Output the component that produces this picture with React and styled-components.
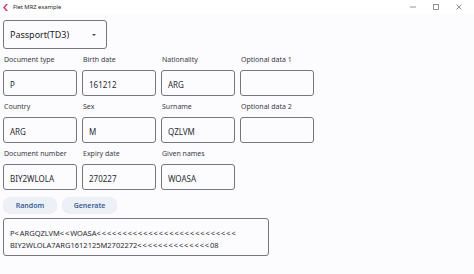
import React from "react";
import styled, { createGlobalStyle } from "styled-components";

const Global = createGlobalStyle`
  html, body { margin: 0; padding: 0; background: #fcfcff; }
  body { font-family: "Noto Sans", "Open Sans", sans-serif; color: #1b1b1f; }
  * { box-sizing: border-box; }
`;

const Window = styled.div`
  width: 474px;
  height: 274px;
  display: flex;
  flex-direction: column;
  background: #fcfcff;
  overflow: hidden;
`;

const TitleBar = styled.div`
  height: 14px;
  background: #ffffff;
  display: flex;
  align-items: center;
  padding-left: 3px;
`;

const TitleText = styled.span`
  font-size: 5.8px;
  color: #222;
  margin-left: 5px;
`;

const Controls = styled.div`
  margin-left: auto;
  display: flex;
  height: 100%;
  padding-right: 4px;
`;

const Ctrl = styled.div`
  width: 23px;
  height: 100%;
  display: flex;
  align-items: center;
  justify-content: center;
`;

const Content = styled.div`
  padding: 6px 3px 0 3px;
  display: flex;
  flex-direction: column;
`;

const Select = styled.div`
  width: 104px;
  height: 29px;
  border: 1px solid #77767b;
  border-radius: 3px;
  display: flex;
  align-items: center;
  padding: 0 10px 0 6px;
  font-size: 9px;
  color: #1b1b1f;
`;

const Caret = styled.span`
  margin-left: auto;
  width: 0;
  height: 0;
  border-left: 2.5px solid transparent;
  border-right: 2.5px solid transparent;
  border-top: 2.5px solid #444;
`;

const Grid = styled.div`
  display: grid;
  grid-template-columns: repeat(4, 74px);
  column-gap: 5px;
`;

const Field = styled.div`
  display: flex;
  flex-direction: column;
`;

const Label = styled.div`
  font-size: 7px;
  height: 21px;
  padding-top: 6px;
  line-height: 10px;
  color: #3a3a3f;
  padding-left: 1px;
`;

const Box = styled.div`
  height: 26px;
  border: 1px solid #77767b;
  border-radius: 3px;
  display: flex;
  align-items: center;
  padding: 2px 6px 0 6px;
  font-size: 8px;
  color: #2a2a2e;
`;

const Buttons = styled.div`
  display: flex;
  gap: 5px;
  margin-top: 7px;
`;

const Button = styled.div`
  width: ${(p) => p.w}px;
  height: 16px;
  border-radius: 8px;
  background: #eef0f7;
  color: #365f96;
  font-size: 7px;
  font-weight: 600;
  display: flex;
  align-items: center;
  justify-content: center;
  box-shadow: 0 0.5px 1px rgba(0, 0, 0, 0.12);
`;

const Mrz = styled.div`
  width: 266px;
  height: 38px;
  margin-top: 5px;
  border: 1px solid #77767b;
  border-radius: 3px;
  padding: 8px 6px 0 6px;
  font-size: 7.5px;
  line-height: 12px;
  color: #2a2a2e;
  white-space: pre;
`;

const Chevrons = styled.span`
  letter-spacing: 0.9px;
`;

const fields = [
  ["Document type", "P"],
  ["Birth date", "161212"],
  ["Nationality", "ARG"],
  ["Optional data 1", ""],
  ["Country", "ARG"],
  ["Sex", "M"],
  ["Surname", "QZLVM"],
  ["Optional data 2", ""],
  ["Document number", "BIY2WLOLA"],
  ["Expiry date", "270227"],
  ["Given names", "WOASA"],
];

const MrzLine = ({ text }) =>
  text.split(/(<+)/).map((part, i) =>
    part.startsWith("<") ? <Chevrons key={i}>{part}</Chevrons> : <span key={i}>{part}</span>
  );

export default function App() {
  return (
    <Window>
      <Global />
      <TitleBar>
        <svg width="5" height="7" viewBox="0 0 5 7">
          <path d="M3 0 L5 0 L2 3.5 L5 7 L3 7 L0 3.5 Z" fill="#d43b7c" />
        </svg>
        <TitleText>Flet MRZ example</TitleText>
        <Controls>
          <Ctrl>
            <svg width="6" height="6" viewBox="0 0 6 6">
              <line x1="0" y1="3" x2="6" y2="3" stroke="#666" strokeWidth="0.7" />
            </svg>
          </Ctrl>
          <Ctrl>
            <svg width="6" height="6" viewBox="0 0 6 6">
              <rect x="0.5" y="0.5" width="5" height="5" fill="none" stroke="#666" strokeWidth="0.7" />
            </svg>
          </Ctrl>
          <Ctrl>
            <svg width="6" height="6" viewBox="0 0 6 6">
              <path d="M0.5 0.5 L5.5 5.5 M5.5 0.5 L0.5 5.5" stroke="#666" strokeWidth="0.7" />
            </svg>
          </Ctrl>
        </Controls>
      </TitleBar>
      <Content>
        <Select>
          Passport(TD3)
          <Caret />
        </Select>
        <Grid>
          {fields.map(([l, v]) => (
            <Field key={l}>
              <Label>{l}</Label>
              <Box>{v}</Box>
            </Field>
          ))}
        </Grid>
        <Buttons>
          <Button w={54}>Random</Button>
          <Button w={55}>Generate</Button>
        </Buttons>
        <Mrz>
          <MrzLine text="P<ARGQZLVM<<WOASA<<<<<<<<<<<<<<<<<<<<<<<<<<<" />
          {"\n"}
          <MrzLine text="BIY2WLOLA7ARG1612125M2702272<<<<<<<<<<<<<<08" />
        </Mrz>
      </Content>
    </Window>
  );
}
